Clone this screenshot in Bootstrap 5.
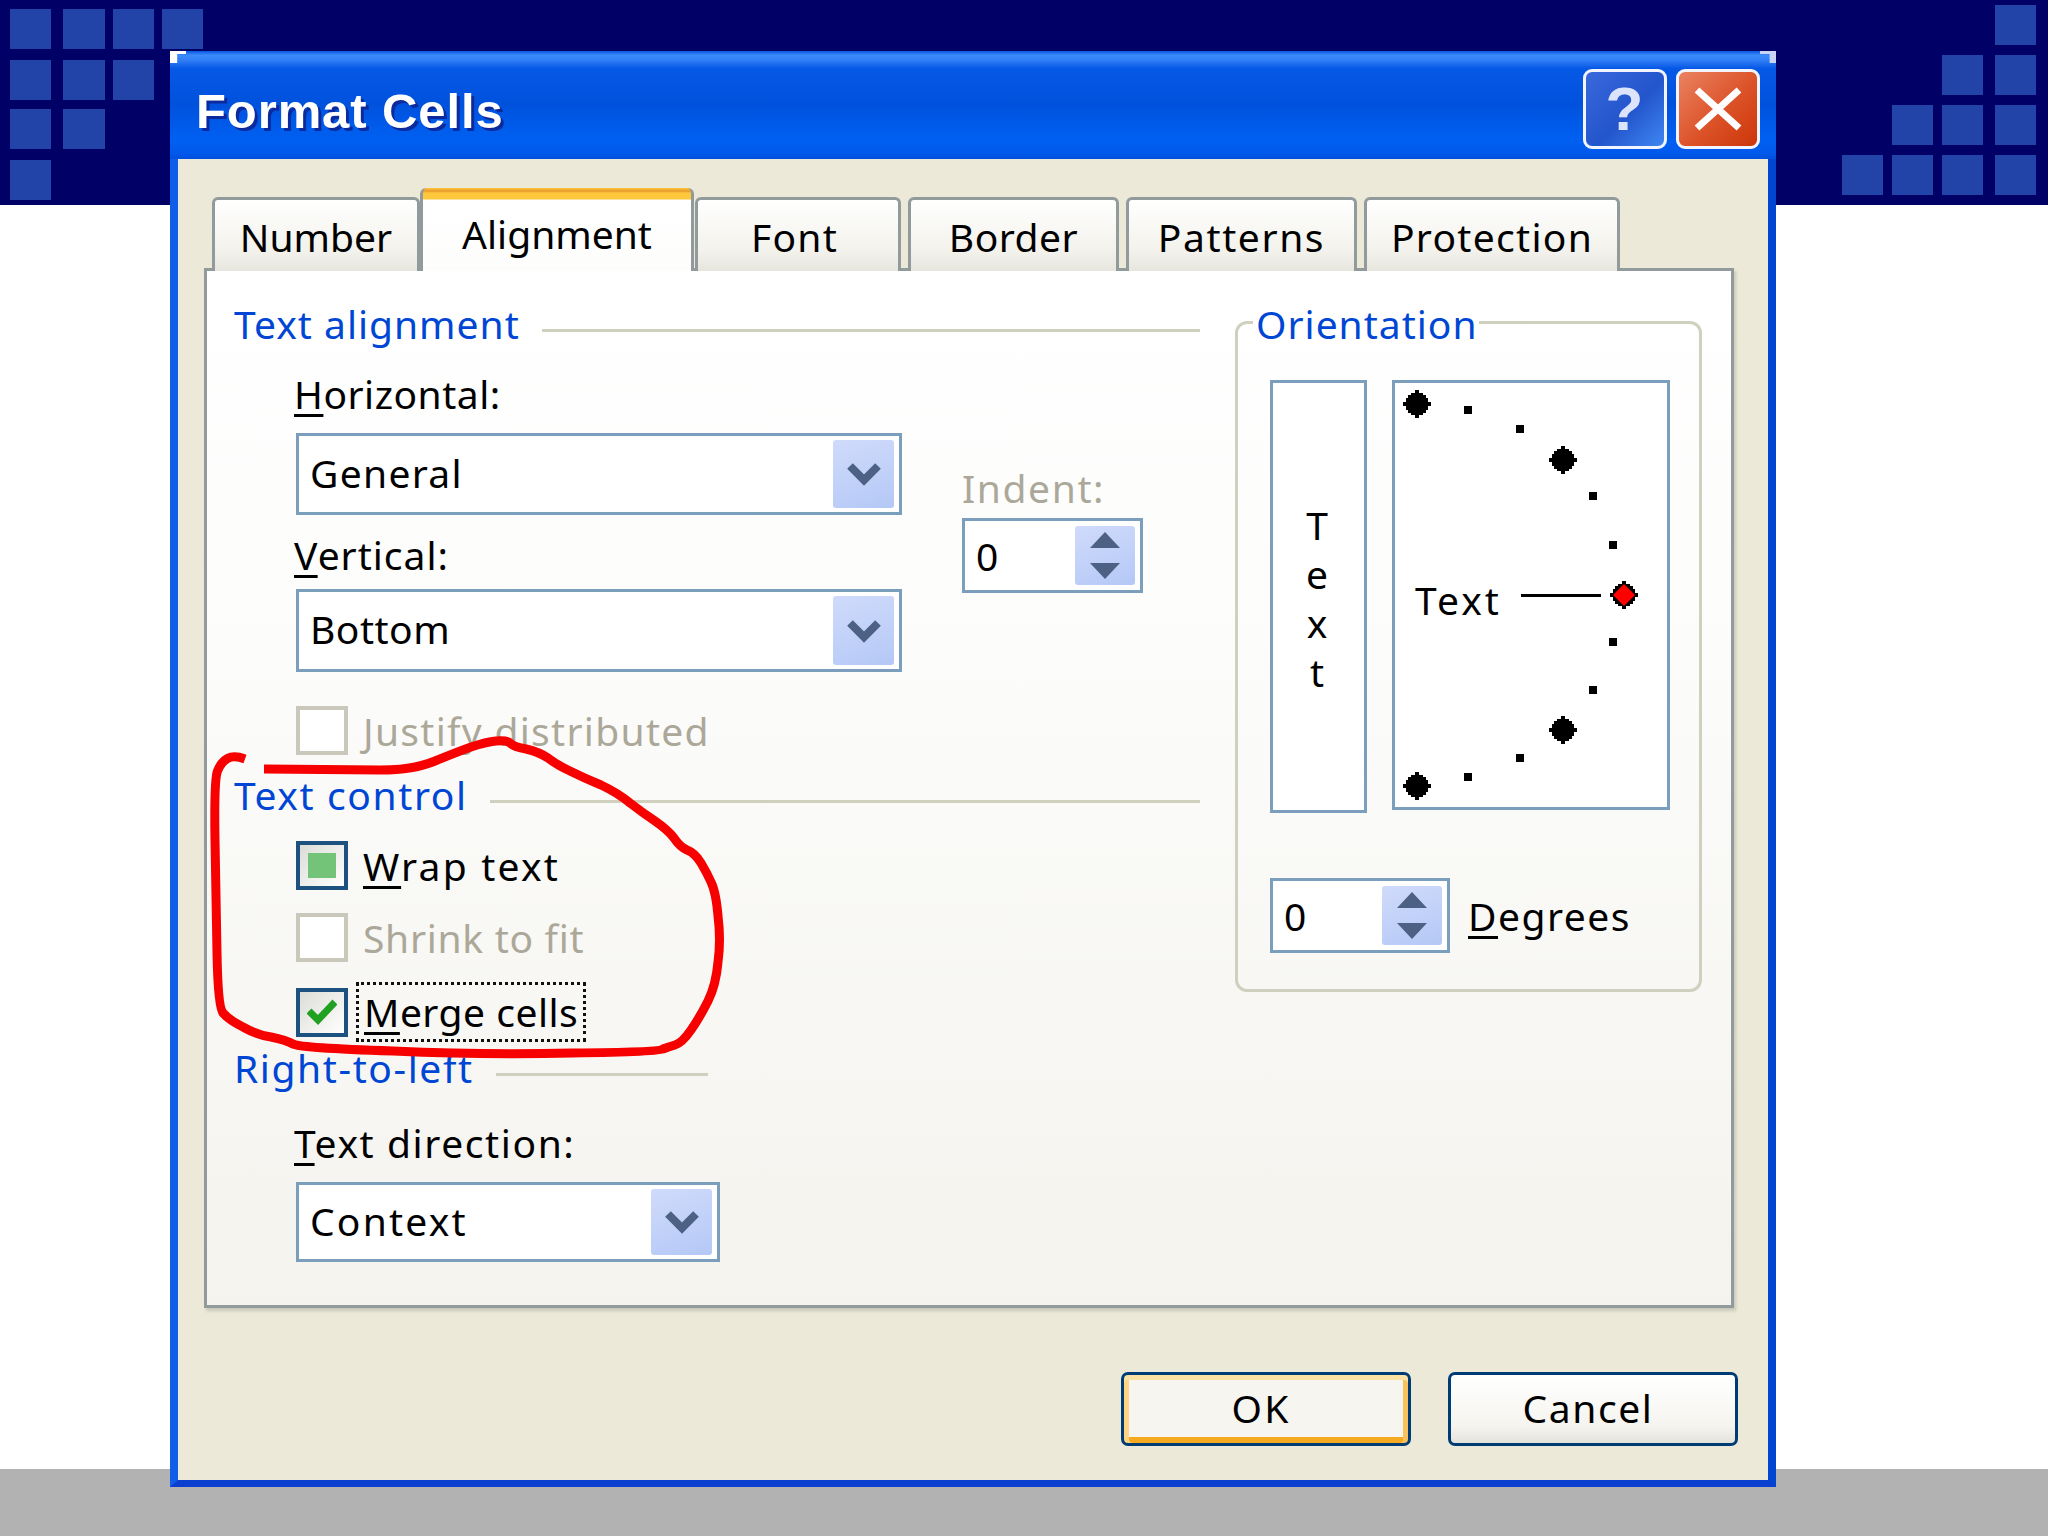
<!DOCTYPE html>
<html lang="en">
<head>
<meta charset="utf-8">
<title>Format Cells</title>
<link href="https://cdn.jsdelivr.net/npm/bootstrap@5.3.0/dist/css/bootstrap.min.css" rel="stylesheet">
<style>
html,body{margin:0;background:#fff}
.stage{width:2048px;height:1536px;overflow:hidden;position:relative;font-family:"Noto Sans","Liberation Sans",sans-serif;font-size:39px;color:#000;line-height:40px;letter-spacing:1px}
.ls-0{letter-spacing:0}.ls-05{letter-spacing:.5px}.ls-07{letter-spacing:.7px}.ls-13{letter-spacing:1.3px}.ls-16{letter-spacing:1.6px}.ls-2{letter-spacing:2.2px}.ls-3{letter-spacing:3px}
.banner{height:205px;background:#000066}
.banner svg{display:block}
.slide-mid{height:1264px;background:#fff}
.slide-foot{height:67px;background:#b2b2b2}
.xp-window{position:absolute;left:170px;top:51px;width:1606px;height:1436px;background:#0054e3;border-bottom:7px solid #0a3fd0;border-left:8px solid #0f5ee8;border-right:8px solid #0046d0}
.xp-window::before,.xp-window::after{content:"";position:absolute;top:0;width:16px;height:12px;background:#fff;z-index:3}
.xp-window::before{left:-8px;clip-path:polygon(0 0,100% 0,100% 25%,45% 25%,45% 100%,0 100%)}
.xp-window::after{right:-8px;background:#c9d4f5;clip-path:polygon(0 0,100% 0,100% 100%,60% 100%,60% 25%,0 25%)}
.xp-title{height:108px;margin:0 -8px;padding:0 16px 0 26px;background:linear-gradient(180deg,#0a55e0 0,#3c8bfb 4%,#2f7cf5 9%,#0659e6 16%,#0052dd 50%,#0060f2 82%,#0159ec 94%,#0050dc 100%)}
.xp-title-text{font-family:"Liberation Sans",sans-serif;font-weight:700;font-size:49px;letter-spacing:.9px;color:#fff;text-shadow:3px 3px 0 #0c2a9c;line-height:1;margin-top:13px}
.cap-btn{width:84px;height:80px;border:3px solid #f2f5ff;border-radius:9px;margin-top:8px}
.cap-help{background:linear-gradient(135deg,#3a68dc,#2355cc 55%,#3f86f2);color:#dbe4fb;font:700 62px/1 "Liberation Sans",sans-serif}
.cap-close{background:linear-gradient(135deg,#ea8262,#dc5228 55%,#cc3608);margin-left:9px}
.xp-body{height:1321px;background:#ece9d8;padding:30px 34px 0 26px;position:relative}
.xp-tabs{height:82px;padding-left:8px;margin-bottom:-3px;position:relative;z-index:2;border:0;flex-wrap:nowrap}
.xp-tabs .nav-link{height:74px;padding:0;color:#000;text-align:center;line-height:74px;border:3px solid #919b9c;border-bottom:0;border-radius:6px 6px 0 0;background:linear-gradient(180deg,#fff,#f3f2ec 70%,#e6e5de)}
.xp-tabs .nav-link.active{height:83px;line-height:92px;border-top:0;border-color:#919b9c;background:linear-gradient(180deg,#ffc73c 0,#e89a2c 3px,#ffc73c 5px,#ffc73c 11px,#fff 12px,#fdfdfc 100%)}
.xp-tabs .tw-num{width:208px}.xp-tabs .tw-ali{width:274px}.xp-tabs .tw-fon{width:206px;margin-left:1px;padding-right:7px}.xp-tabs .tw-bor{width:211px;margin-left:7px}.xp-tabs .tw-pat{width:231px;margin-left:7px}.xp-tabs .tw-pro{width:256px;margin-left:7px}
.xp-panel{height:1040px;border:3px solid #919b9c;background:linear-gradient(180deg,#fff,#fcfcfb 35%,#f4f3ee);padding:35px 0 0 27px;box-shadow:2px 3px 3px #c9c7ba}
.col-left{width:966px}
.sec-head{height:36px;color:#0046d5;line-height:36px;white-space:nowrap}
.sec-head .rule{flex:1;height:3px;background:#d0d0bf;margin-top:23px;margin-left:22px}
.sec-short{width:474px}
.lbl{height:40px;white-space:nowrap}
.lbl u,.uk{text-decoration-thickness:3px;text-underline-offset:5px}
.in-60{margin-left:60px}
.in-62{margin-left:62px}
.dis{color:#aca899}
.xp-select{height:82px;width:606px;border:3px solid #7b9ebd;background:#fff;padding:4px 5px 4px 11px}
.xp-select>span:first-child{margin-top:-3px}
.xp-select.ctx{width:424px;height:80px}
.arrow-box{width:61px;background:linear-gradient(160deg,#d0dbfb,#b4c8f6);border-radius:3px}
.xp-spin{height:75px;border:3px solid #7b9ebd;background:#fff;padding:5px 5px 5px 11px}
.spin-box{width:60px;background:linear-gradient(160deg,#d0dbfb,#b4c8f6);border-radius:3px;gap:15px}
.w-indent{width:181px}.w-deg{width:180px}
.xp-check{width:52px;height:49px;border:4px solid #1c5180;background:linear-gradient(135deg,#dcdcd7,#fff)}
.xp-check.off{border-color:#cac8bb;background:#fff}
.xp-check .tick-fill{width:28px;height:25px;background:#73c378}
.focus-rect{outline:3px dotted #111;outline-offset:-3px;padding:10px 8px 10px 8px;margin-left:8px;height:60px;line-height:40px;letter-spacing:.5px}
.chk-gap{margin-left:15px}
.xp-group{width:467px;min-width:467px;height:686px;margin-left:35px;border:3px solid #d0d0bf;border-radius:12px;padding:0 0 0 32px}
.xp-group legend{float:none;width:auto;margin:0 0 42px -17px;padding:0 1px 0 3px;height:32px;line-height:36px;font-size:39px;color:#0046d5}
.vbox{width:97px;height:433px;border:3px solid #7b9ebd;background:#fff;line-height:49px;padding:2px 3px 0 0;letter-spacing:0}
.dial{width:278px;height:430px;border:3px solid #7b9ebd;background:#fff;margin-left:25px}
.dial svg{display:block}
.dial text{font-family:"Noto Sans","Liberation Sans",sans-serif;font-size:39px;letter-spacing:3px}
.deg-row{margin-top:65px}
.deg-lbl{margin-left:18px;letter-spacing:1.5px}
.xp-actions{padding:64px 0 0;gap:37px;margin-right:-4px}
.xp-btn{width:290px;height:74px;padding:0 10px 4px 0;border:3px solid #003c74;border-radius:7px;color:#000;font-size:39px;line-height:1;background:linear-gradient(180deg,#fff,#f5f4ef 75%,#e3e2da);box-shadow:none}
.xp-btn.def{background:#f6f5f0;box-shadow:inset 0 5px 0 #fbe2a2,inset 5px 0 0 #fcd483,inset -5px 0 0 #f9c15c,inset 0 -6px 0 #f5a91f}
.scribble{position:absolute;left:0;top:0;z-index:5;pointer-events:none}
.sub1{margin-top:32px}.sel1{margin-top:19px}.sub2{margin-top:20px}.sel2{margin-top:14px;height:83px}
.indent-col{margin-left:60px;margin-top:126px}.ind-spin{margin-top:10px}
.r-justify{margin-top:34px}.r-tc{margin-top:22px}.r-wrap{margin-top:28px}.r-shrink{margin-top:23px}.r-merge{margin-top:20px}
.r-rtl{margin-top:8px}.r-dir{margin-top:37px}.r-ctx{margin-top:19px}
</style>
</head>
<body>
<div class="stage">
  <div class="banner d-flex justify-content-between">
    <svg width="210" height="205" fill="#2243a8"><rect x="10" y="9" width="41" height="40"/><rect x="63" y="9" width="42" height="40"/><rect x="113" y="9" width="41" height="40"/><rect x="162" y="9" width="41" height="40"/><rect x="10" y="60" width="41" height="40"/><rect x="63" y="60" width="42" height="40"/><rect x="113" y="60" width="41" height="40"/><rect x="10" y="109" width="41" height="40"/><rect x="63" y="109" width="42" height="40"/><rect x="10" y="160" width="41" height="40"/></svg>
    <svg width="206" height="205" fill="#2243a8"><rect x="153" y="5" width="41" height="40"/><rect x="100" y="55" width="41" height="40"/><rect x="153" y="55" width="41" height="40"/><rect x="50" y="105" width="41" height="40"/><rect x="100" y="105" width="41" height="40"/><rect x="153" y="105" width="41" height="40"/><rect y="155" width="41" height="40"/><rect x="50" y="155" width="41" height="40"/><rect x="100" y="155" width="41" height="40"/><rect x="153" y="155" width="41" height="40"/></svg>
  </div>
  <div class="slide-mid"></div>
  <div class="slide-foot"></div>

  <div class="xp-window">
    <div class="xp-title d-flex align-items-center justify-content-between">
      <div class="xp-title-text">Format Cells</div>
      <div class="d-flex">
        <div class="cap-btn cap-help d-flex align-items-center justify-content-center">?</div>
        <div class="cap-btn cap-close d-flex align-items-center justify-content-center">
          <svg width="50" height="44" viewBox="0 0 50 44"><path d="M4 3L46 41M46 3L4 41" stroke="#fff" stroke-width="7" fill="none"/></svg>
        </div>
      </div>
    </div>
    <div class="xp-body">
      <ul class="nav xp-tabs align-items-end">
        <li class="nav-item"><a class="nav-link tw-num ls-0" href="#">Number</a></li>
        <li class="nav-item"><a class="nav-link active tw-ali ls-0" href="#">Alignment</a></li>
        <li class="nav-item"><a class="nav-link tw-fon ls-13" href="#">Font</a></li>
        <li class="nav-item"><a class="nav-link tw-bor ls-05" href="#">Border</a></li>
        <li class="nav-item"><a class="nav-link tw-pat ls-16" href="#">Patterns</a></li>
        <li class="nav-item"><a class="nav-link tw-pro ls-13" href="#">Protection</a></li>
      </ul>
      <div class="xp-panel d-flex align-items-start">
        <div class="col-left">
          <div class="sec-head d-flex"><span>Text alignment</span><span class="rule"></span></div>
          <div class="d-flex">
            <div>
              <div class="lbl in-60 sub1 ls-05"><u>H</u>orizontal:</div>
              <div class="xp-select in-62 d-flex align-items-center justify-content-between sel1"><span class="ls-13">General</span>
                <span class="arrow-box d-flex align-self-stretch align-items-center justify-content-center"><svg width="36" height="24" viewBox="0 0 36 24"><path d="M4 4L18 18L32 4" fill="none" stroke="#4d6185" stroke-width="8"/></svg></span></div>
              <div class="lbl in-60 sub2"><u>V</u>ertical:</div>
              <div class="xp-select in-62 d-flex align-items-center justify-content-between sel2"><span class="ls-05">Bottom</span>
                <span class="arrow-box d-flex align-self-stretch align-items-center justify-content-center"><svg width="36" height="24" viewBox="0 0 36 24"><path d="M4 4L18 18L32 4" fill="none" stroke="#4d6185" stroke-width="8"/></svg></span></div>
            </div>
            <div class="indent-col">
              <div class="lbl dis ls-16">Indent:</div>
              <div class="xp-spin w-indent d-flex align-items-center justify-content-between ind-spin"><span>0</span>
                <span class="spin-box d-flex flex-column align-self-stretch align-items-center justify-content-center"><svg width="30" height="16"><path d="M15 0L30 16H0Z" fill="#4d6185"/></svg><svg width="30" height="16"><path d="M15 16L30 0H0Z" fill="#4d6185"/></svg></span></div>
            </div>
          </div>
          <div class="d-flex align-items-center in-62 r-justify"><span class="xp-check off"></span><span class="chk-gap dis ls-13">Justify distributed</span></div>
          <div class="sec-head d-flex r-tc"><span class="ls-16">Text control</span><span class="rule"></span></div>
          <div class="d-flex align-items-center in-62 r-wrap"><span class="xp-check d-flex align-items-center justify-content-center"><span class="tick-fill"></span></span><span class="chk-gap ls-2"><u class="uk">W</u>rap text</span></div>
          <div class="d-flex align-items-center in-62 r-shrink"><span class="xp-check off"></span><span class="chk-gap dis ls-07">Shrink to fit</span></div>
          <div class="d-flex align-items-center in-62 r-merge"><span class="xp-check d-flex align-items-center justify-content-center"><svg width="30" height="28" viewBox="0 0 30 28"><path d="M2 13L11 22L28 4" fill="none" stroke="#21a121" stroke-width="7"/></svg></span><span class="focus-rect lbl"><u>M</u>erge cells</span></div>
          <div class="sec-head sec-short d-flex r-rtl"><span class="ls-16">Right-to-left</span><span class="rule"></span></div>
          <div class="lbl in-60 r-dir ls-16"><u>T</u>ext direction:</div>
          <div class="xp-select ctx in-62 d-flex align-items-center justify-content-between r-ctx"><span class="ls-2">Context</span>
            <span class="arrow-box d-flex align-self-stretch align-items-center justify-content-center"><svg width="36" height="24" viewBox="0 0 36 24"><path d="M4 4L18 18L32 4" fill="none" stroke="#4d6185" stroke-width="8"/></svg></span></div>
        </div>
        <fieldset class="xp-group">
          <legend>Orientation</legend>
          <div class="d-flex">
            <div class="vbox d-flex flex-column align-items-center justify-content-center"><span>T</span><span>e</span><span>x</span><span>t</span></div>
            <div class="dial">
              <svg width="272" height="424" viewBox="3 3 272 424">
                <defs><path id="dm" d="M-2-14H2V-11H6V-9H9V-6H11V-2H14V2H11V6H9V9H6V11H2V14H-2V11H-6V9H-9V6H-11V2H-14V-2H-11V-6H-9V-9H-6V-11H-2Z"/></defs>
                <use href="#dm" x="25" y="24"/><use href="#dm" x="171" y="80"/><use href="#dm" x="232" y="215"/><use href="#dm" x="171" y="350"/><use href="#dm" x="25" y="406"/>
                <path transform="translate(232 215)" d="M0-11L11 0L0 11L-11 0Z" fill="#f00"/>
                <g><rect x="72" y="26" width="8" height="8"/><rect x="124" y="45" width="8" height="8"/><rect x="197" y="112" width="8" height="8"/><rect x="217" y="161" width="8" height="8"/><rect x="217" y="258" width="8" height="8"/><rect x="197" y="306" width="8" height="8"/><rect x="124" y="374" width="8" height="8"/><rect x="72" y="393" width="8" height="8"/></g>
                <text x="23" y="235">Text</text>
                <rect x="129" y="214" width="80" height="3"/>
              </svg>
            </div>
          </div>
          <div class="d-flex align-items-center deg-row">
            <div class="xp-spin w-deg d-flex align-items-center justify-content-between"><span>0</span>
              <span class="spin-box d-flex flex-column align-self-stretch align-items-center justify-content-center"><svg width="30" height="16"><path d="M15 0L30 16H0Z" fill="#4d6185"/></svg><svg width="30" height="16"><path d="M15 16L30 0H0Z" fill="#4d6185"/></svg></span></div>
            <span class="lbl deg-lbl"><u>D</u>egrees</span>
          </div>
        </fieldset>
      </div>
      <div class="xp-actions d-flex justify-content-end">
        <button class="btn xp-btn def ls-2" type="button">OK</button>
        <button class="btn xp-btn ls-16" type="button">Cancel</button>
      </div>
    </div>
  </div>

  <svg class="scribble" width="2048" height="1536"><path d="M245 759Q234 755 227.5 758.5Q221 762 217.5 771Q214 780 215 840Q216 900 217 953Q218 1007 223 1013Q229 1020 243 1027Q257 1035 271 1037Q286 1040 293 1044Q300 1048 393 1051Q486 1055 572 1053Q659 1052 663 1049Q668 1047 675 1045Q682 1043 691 1030Q700 1017 708 1001Q716 985 718 962Q721 940 718 916Q716 892 711 882Q707 873 701 863Q695 853 687 850Q680 847 674 838Q668 830 655 821Q643 813 630 803Q618 793 601 785Q584 778 570 771Q557 765 548 758Q539 752 526 749Q514 747 510 743Q507 740 496 741Q486 742 471 747Q457 752 435 761Q414 770 380 770L264 769" fill="none" stroke="#f60000" stroke-width="9" stroke-linejoin="round"/></svg>
</div>
<script src="https://cdn.jsdelivr.net/npm/bootstrap@5.3.0/dist/js/bootstrap.bundle.min.js"></script>
</body>
</html>
